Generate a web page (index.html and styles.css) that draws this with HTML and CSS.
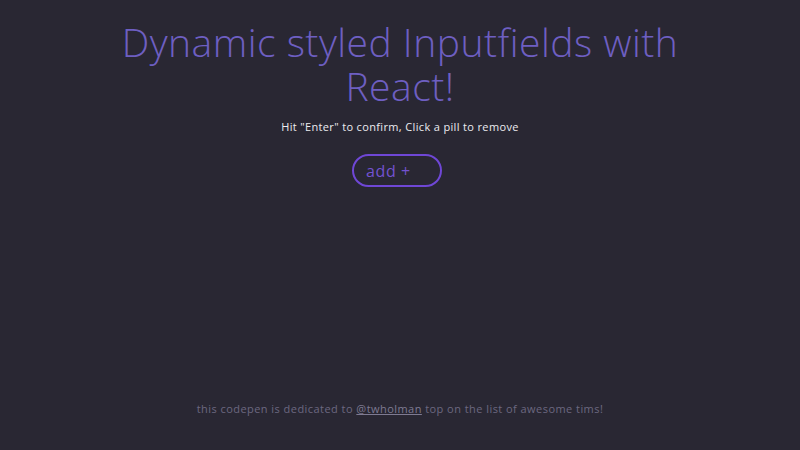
FILE: index.html
```html
<!DOCTYPE html>
<html lang="en">
<head>
  <meta charset="UTF-8" />
  <title>Dynamic styled Inputfields with React!</title>
  <meta name="viewport" content="width=device-width, initial-scale=1" />
  <link rel="stylesheet" href="styles.css">
</head>
<body>

  <div class="app">
    <h1>Dynamic styled Inputfields with React!</h1>
    <p class="hint">Hit "Enter" to confirm, Click a pill to remove</p>

    <div class="pills">
      <input type="text" class="pill-input" placeholder="add +" />
    </div>
  </div>

  <footer class="credits">
    this codepen is dedicated to <a href="#">@twholman</a> top on the list of awesome tims!
  </footer>

</body>
</html>
```

FILE: styles.css
```css
html, body {
  height: 100%;
}
body {
  background: #292733;
  font-family: "Open Sans", "Lato", sans-serif;
  margin: 0;
  display: flex;
  flex-direction: column;
  align-items: center;
  color: #ececf0;
}
.app {
  flex: 1;
  display: flex;
  flex-direction: column;
  align-items: center;
  padding-top: 20px;
}
h1 {
  width: 600px;
  margin: 0;
  font-size: 39px;
  font-weight: 200;
  line-height: 44px;
  letter-spacing: 0.5px;
  text-align: center;
  color: #6e5fc2;
}
.hint {
  margin: 11px 0 0;
  font-size: 11px;
  letter-spacing: 0.35px;
}
.pills {
  margin-top: 20px;
  margin-right: 6px;
}
.pill-input {
  box-sizing: border-box;
  width: 90px;
  height: 33px;
  padding: 0 12px;
  border: 2px solid #6f47d6;
  border-radius: 17px;
  background: transparent;
  font-family: inherit;
  font-size: 16px;
  letter-spacing: 0.6px;
  color: #7b5cd6;
  outline: none;
}
.pill-input::placeholder {
  color: #7352d0;
}
.credits {
  padding-bottom: 34px;
  font-size: 11px;
  letter-spacing: 0.45px;
  color: #6c6880;
}
.credits a {
  color: #7e7a92;
}
```
